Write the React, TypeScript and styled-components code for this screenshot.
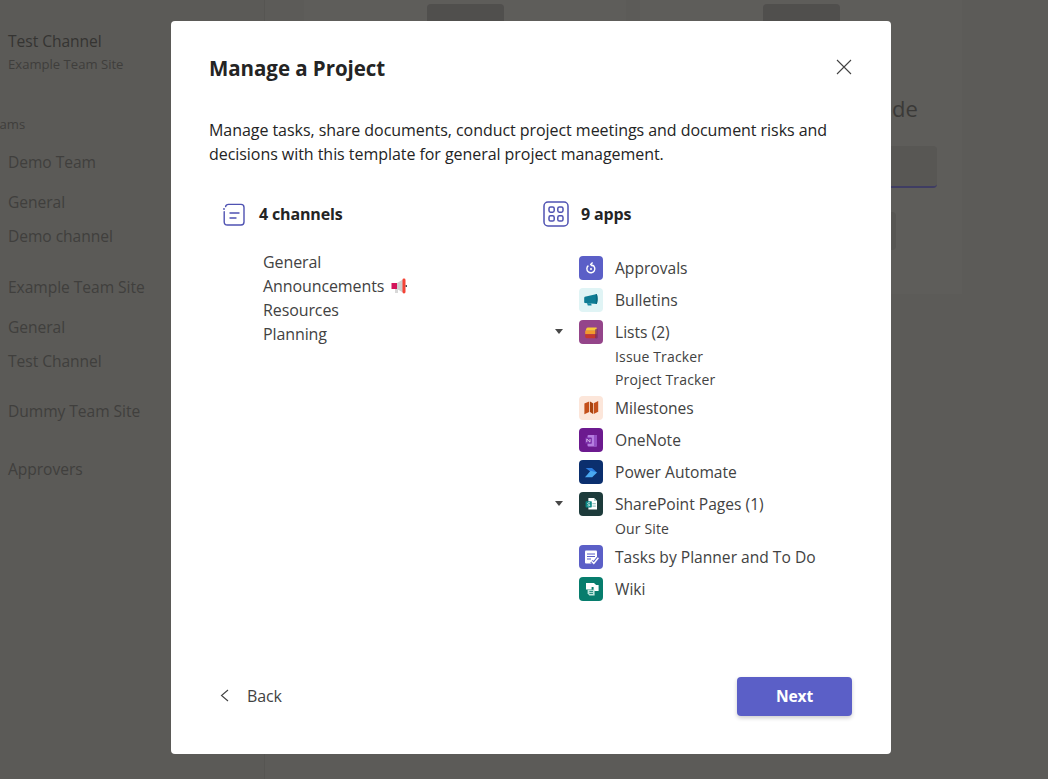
import React from 'react';
import styled, { createGlobalStyle } from 'styled-components';

const GlobalStyle = createGlobalStyle`
  html, body {
    margin: 0;
    padding: 0;
    height: 100%;
    overflow: hidden;
    background: #5c5b58;
    font-family: "Open Sans", "Noto Sans", "Liberation Sans", sans-serif;
  }
  #root { height: 100%; }
`;

const Page = styled.div`
  position: relative;
  display: flex;
  width: 1048px;
  height: 779px;
  overflow: hidden;
  background: #5c5b58;
`;

const Sidebar = styled.div`
  flex: 0 0 265px;
  box-sizing: border-box;
  padding: 30px 0 0 8px;
  background: #5b5a57;
  border-right: 1px solid #565552;
  color: #403f3d;
`;

const SideItem = styled.div<{ $gap?: number; $dark?: boolean }>`
  margin-top: ${(p) => p.$gap ?? 0}px;
  height: 22px;
  line-height: 22px;
  font-size: 15.6px;
  letter-spacing: -0.05px;
  white-space: nowrap;
  color: ${(p) => (p.$dark ? '#353432' : '#403f3d')};
`;

const SideSub = styled.div<{ $gap?: number; $shift?: number }>`
  margin-top: ${(p) => p.$gap ?? 0}px;
  margin-left: ${(p) => p.$shift ?? 0}px;
  height: 18px;
  line-height: 18px;
  font-size: 13.1px;
  white-space: nowrap;
  color: #3f3e3c;
`;

const Main = styled.div`
  flex: 1;
  display: flex;
  gap: 14px;
  align-items: flex-start;
  padding-left: 39px;
`;

const BackCard = styled.div`
  flex: 0 0 322px;
  box-sizing: border-box;
  height: 294px;
  padding: 4px 0 0;
  background: #5e5d5a;
  display: flex;
  flex-direction: column;
  align-items: center;
`;

const Thumb = styled.div`
  width: 77px;
  height: 40px;
  flex: none;
  border-radius: 4px;
  background: #504f4d;
`;

const BackHeading = styled.div`
  margin-top: 49px;
  margin-right: 4px;
  height: 30px;
  line-height: 30px;
  font-size: 22px;
  font-weight: 500;
  color: #3a3937;
  white-space: nowrap;
`;

const BackInput = styled.div`
  margin-top: 23px;
  align-self: flex-end;
  margin-right: 25px;
  box-sizing: border-box;
  width: 272px;
  height: 42px;
  border-radius: 4px;
  background: #585754;
  border-bottom: 2px solid #3f3d63;
`;

const BackButton = styled.div`
  margin-top: 24px;
  align-self: flex-end;
  margin-right: 66px;
  width: 100px;
  height: 38px;
  border-radius: 4px;
  background: #575653;
`;

const Overlay = styled.div`
  position: absolute;
  inset: 0;
  box-sizing: border-box;
  padding: 21px 0 0 171px;
`;

const Dialog = styled.div`
  box-sizing: border-box;
  width: 720px;
  height: 733px;
  padding: 32px 39px 38px 38px;
  border-radius: 4px;
  background: #ffffff;
  display: flex;
  flex-direction: column;
  color: #242424;
`;

const Header = styled.div`
  display: flex;
  justify-content: space-between;
  align-items: center;
  height: 30px;
`;

const Title = styled.h1`
  margin: 0;
  font-size: 20.5px;
  line-height: 30px;
  font-weight: 700;
  letter-spacing: -0.05px;
  color: #242424;
`;

const CloseButton = styled.button`
  border: 0;
  padding: 0;
  margin: -2px 0 0;
  width: 16px;
  height: 16px;
  display: flex;
  background: none;
  color: #424242;
`;

const Description = styled.p`
  margin: 35px 0 0;
  font-size: 16px;
  line-height: 24px;
  letter-spacing: -0.05px;
  color: #242424;
  width: 640px;
`;

const Columns = styled.div`
  display: flex;
  margin-top: 35px;
`;

const LeftCol = styled.div`
  flex: 0 0 321px;
  padding-left: 13px;
`;

const RightCol = styled.div`
  flex: 1;
`;

const ColHead = styled.div<{ $gap: number }>`
  display: flex;
  align-items: center;
  gap: ${(p) => p.$gap}px;
  height: 26px;
  font-size: 16px;
  font-weight: 700;
  letter-spacing: -0.15px;
  color: #242424;
`;

const ChannelList = styled.ul`
  list-style: none;
  margin: 23px 0 0;
  padding: 0 0 0 41px;
`;

const ChannelItem = styled.li`
  display: flex;
  align-items: center;
  gap: 7px;
  height: 24px;
  font-size: 16px;
  letter-spacing: -0.1px;
  color: #424242;
`;

const AppList = styled.ul`
  list-style: none;
  margin: 25px 0 0;
  padding: 0 0 0 12px;
`;

const AppRow = styled.li`
  position: relative;
  display: flex;
  align-items: center;
  gap: 12px;
  height: 32px;
  padding-left: 24px;
  font-size: 15.6px;
  color: #424242;
`;

const Caret = styled.span`
  position: absolute;
  left: 0;
  top: 13px;
  width: 0;
  height: 0;
  border-left: 4px solid transparent;
  border-right: 4px solid transparent;
  border-top: 5px solid #484848;
`;

const SubRow = styled.li<{ $top: number; $bottom: number }>`
  display: flex;
  align-items: center;
  height: 18px;
  margin: ${(p) => p.$top}px 0 ${(p) => p.$bottom}px;
  padding-left: 60px;
  font-size: 14px;
  letter-spacing: 0.15px;
  color: #424242;
`;

const Tile = styled.span<{ $bg: string }>`
  flex: none;
  width: 24px;
  height: 24px;
  border-radius: 4px;
  background: ${(p) => p.$bg};
  display: flex;
`;

const Footer = styled.div`
  margin-top: auto;
  display: flex;
  align-items: center;
  justify-content: space-between;
  padding-left: 11px;
`;

const BackLink = styled.button`
  border: 0;
  background: none;
  padding: 0 0 2px;
  display: flex;
  align-items: center;
  gap: 18px;
  font-family: inherit;
  font-size: 16px;
  letter-spacing: -0.1px;
  color: #424242;
`;

const NextButton = styled.button`
  width: 115px;
  height: 39px;
  border: 0;
  border-radius: 4px;
  padding: 0 0 2px;
  background: #5b5fc7;
  color: #ffffff;
  font-family: inherit;
  font-size: 15.6px;
  font-weight: 700;
  letter-spacing: -0.15px;
  box-shadow: 0 2px 4px rgba(0, 0, 0, 0.2);
`;

const ChannelsIcon = () => (
  <svg width="24" height="24" viewBox="0 0 24 24" fill="none" stroke="#4f52b2" strokeWidth="1.4" strokeLinecap="round">
    <path d="M3.6 4.6 Q4 2.4 6.5 2.4 H19 Q22 2.4 22 5.4 V20 Q22 23 19 23 H5.5 Q2.2 23 2.2 20 V9.6" />
    <circle cx="2" cy="7" r="0.9" fill="#4f52b2" stroke="none" />
    <path d="M8 11 H17" />
    <path d="M8 16 H14" />
  </svg>
);

const AppsIcon = () => (
  <svg width="26" height="26" viewBox="0 0 26 26" fill="none" stroke="#4f52b2" strokeWidth="1.5">
    <rect x="1" y="1" width="24" height="24" rx="4" />
    <rect x="6" y="6" width="5.2" height="5.2" rx="1.6" />
    <rect x="14.8" y="6" width="5.2" height="5.2" rx="1.6" />
    <rect x="6" y="14.8" width="5.2" height="5.2" rx="1.6" />
    <rect x="14.8" y="14.8" width="5.2" height="5.2" rx="1.6" />
  </svg>
);

const Megaphone = () => (
  <svg width="16" height="16" viewBox="0 0 16 16">
    <rect x="0.5" y="5" width="5.5" height="6" fill="#d4145a" />
    <path d="M6 5 L12 1.5 V14.5 L6 11 Z" fill="#cfcfcf" />
    <rect x="4" y="11" width="3" height="4" fill="#d8d8d8" />
    <rect x="11.5" y="0.5" width="3" height="15" rx="1.4" fill="#f44336" />
    <circle cx="15.3" cy="8" r="0.9" fill="#444" />
  </svg>
);

const ApprovalsArt = () => (
  <svg width="24" height="24" viewBox="0 0 24 24" fill="none" stroke="#fff" strokeWidth="1.4">
    <path d="M9.4 9.6 A4 4 0 1 0 13.2 9" />
    <path d="M13.6 6.4 L11.6 8.4 L13.6 10.2" strokeLinejoin="round" />
    <circle cx="12" cy="13" r="1" fill="#fff" stroke="none" />
  </svg>
);

const BulletinsArt = () => (
  <svg width="24" height="24" viewBox="0 0 24 24">
    <path d="M5.8 8.8 L18 6 V16 L5.8 15 Q5.2 15 5.2 14 V10 Q5.2 9 5.8 8.8 Z" fill="#0f7c94" />
    <path d="M16.8 6 Q18.8 6 18.8 11 Q18.8 16 16.8 16 Z" fill="#0a6a80" />
    <path d="M8 15 L8.8 17.4 H12.6 L12.2 15.4 Z" fill="#14869f" />
  </svg>
);

const ListsArt = () => (
  <svg width="24" height="24" viewBox="0 0 24 24">
    <path d="M7.4 8.6 Q7.6 7.4 9 7.4 H17.6 V10.8 H6.6 Z" fill="#f9c83a" />
    <rect x="6.2" y="10.8" width="11.4" height="3.4" fill="#f29a2e" />
    <path d="M6.2 14.2 H17.6 V16.8 Q17.4 18.2 16 18.2 H7.6 Q6.2 18.2 6.2 16.8 Z" fill="#c5382f" />
    <rect x="16" y="9" width="2.8" height="9.4" rx="0.8" fill="#6e2a62" opacity="0.6" />
  </svg>
);

const MilestonesArt = () => (
  <svg width="24" height="24" viewBox="0 0 24 24" fill="#c4501b">
    <path d="M5.4 7.6 L10.2 5.4 V16 L5.4 18.3 Z" />
    <path d="M11 5.4 L14 7.2 V18 L11 16 Z" fill="#a8430f" />
    <path d="M14.7 7.2 L19.2 5 V15.8 L14.7 18 Z" />
  </svg>
);

const OneNoteArt = () => (
  <svg width="24" height="24" viewBox="0 0 24 24">
    <rect x="8.5" y="7" width="9.5" height="11.4" rx="1" fill="#b57ee0" />
    <rect x="15" y="7" width="3" height="11.4" fill="#9550c6" />
    <rect x="6" y="9.6" width="6.8" height="6.2" rx="0.8" fill="#7a2aa8" />
    <path d="M7.8 14.2 V11 L11 14.2 V11" stroke="#e9d8f5" strokeWidth="0.8" fill="none" />
  </svg>
);

const AutomateArt = () => (
  <svg width="24" height="24" viewBox="0 0 24 24">
    <path d="M6.6 8 H13 L18 12.4 L15.2 14.6 Z" fill="#2b7de0" />
    <path d="M6 17.2 L11.6 10.8 L18 12.4 L13.2 17.2 Z" fill="#4aa8f0" />
  </svg>
);

const SharePointArt = () => (
  <svg width="24" height="24" viewBox="0 0 24 24">
    <path d="M9.4 6 H15 L18 9 V17.4 H9.4 Z" fill="#ffffff" />
    <path d="M15 6 V9 H18 Z" fill="#a9d3cf" />
    <rect x="13.4" y="11.2" width="3.4" height="1" fill="#7fb6b2" />
    <rect x="13.4" y="13.6" width="3.4" height="1" fill="#7fb6b2" />
    <rect x="6.6" y="9.2" width="6.2" height="6.2" rx="0.7" fill="#0b8a85" />
    <path d="M11 10.8 Q8.6 10.2 8.6 11.6 Q8.7 12.3 9.8 12.4 Q11.1 12.6 10.9 13.4 Q10.2 14.2 8.5 13.8" stroke="#fff" strokeWidth="0.7" fill="none" />
  </svg>
);

const TasksArt = () => (
  <svg width="24" height="24" viewBox="0 0 24 24">
    <path d="M7 5.5 H17 Q18 5.5 18 6.5 V12 L13 18.5 H7 Q6 18.5 6 17.5 V6.5 Q6 5.5 7 5.5 Z" fill="#fff" />
    <path d="M8 9 H16 M8 11.5 H16 M8 14 H12" stroke="#5b5fc7" strokeWidth="1" />
    <path d="M12.5 16.2 L14.8 18.4 L19.4 12.8" stroke="#5b5fc7" strokeWidth="3.4" fill="none" />
    <path d="M12.5 16.2 L14.8 18.4 L19.4 12.8" stroke="#fff" strokeWidth="1.5" fill="none" />
  </svg>
);

const WikiArt = () => (
  <svg width="24" height="24" viewBox="0 0 24 24">
    <path d="M7 6 H15 L17.6 8.4 V10 H12.6 V12.6 H7 Z" fill="#fff" />
    <rect x="14.6" y="8" width="5" height="6" fill="#fff" />
    <path d="M8.6 12.8 H15.6 V18.4 H10.4 L8.6 16.6 Z" fill="#bfe6dd" />
    <path d="M10.4 14.4 H14 M10.4 16.4 H14" stroke="#077d6d" strokeWidth="0.9" />
  </svg>
);

const App = () => (
  <>
    <GlobalStyle />
    <Page>
      <Sidebar>
        <SideItem $dark>Test Channel</SideItem>
        <SideSub $gap={3}>Example Team Site</SideSub>
        <SideSub $gap={42} $shift={-23}>Teams</SideSub>
        <SideItem $gap={18}>Demo Team</SideItem>
        <SideItem $gap={18}>General</SideItem>
        <SideItem $gap={12}>Demo channel</SideItem>
        <SideItem $gap={29}>Example Team Site</SideItem>
        <SideItem $gap={18}>General</SideItem>
        <SideItem $gap={12}>Test Channel</SideItem>
        <SideItem $gap={28}>Dummy Team Site</SideItem>
        <SideItem $gap={36}>Approvers</SideItem>
      </Sidebar>
      <Main>
        <BackCard>
          <Thumb />
        </BackCard>
        <BackCard>
          <Thumb />
          <BackHeading>Join a team with a code</BackHeading>
          <BackInput />
          <BackButton />
        </BackCard>
      </Main>
      <Overlay>
        <Dialog>
          <Header>
            <Title>Manage a Project</Title>
            <CloseButton aria-label="Close">
              <svg width="16" height="16" viewBox="0 0 16 16" fill="none" stroke="currentColor" strokeWidth="1.1">
                <path d="M1 1 L15 15 M15 1 L1 15" />
              </svg>
            </CloseButton>
          </Header>
          <Description>
            Manage tasks, share documents, conduct project meetings and document risks and decisions with this template for general project management.
          </Description>
          <Columns>
            <LeftCol>
              <ColHead $gap={13}>
                <ChannelsIcon />
                4 channels
              </ColHead>
              <ChannelList>
                <ChannelItem>General</ChannelItem>
                <ChannelItem>
                  Announcements
                  <Megaphone />
                </ChannelItem>
                <ChannelItem>Resources</ChannelItem>
                <ChannelItem>Planning</ChannelItem>
              </ChannelList>
            </LeftCol>
            <RightCol>
              <ColHead $gap={12}>
                <AppsIcon />
                9 apps
              </ColHead>
              <AppList>
                <AppRow>
                  <Tile $bg="#5b5fc7"><ApprovalsArt /></Tile>
                  Approvals
                </AppRow>
                <AppRow>
                  <Tile $bg="#e0f4f5"><BulletinsArt /></Tile>
                  Bulletins
                </AppRow>
                <AppRow>
                  <Caret />
                  <Tile $bg="#94458a"><ListsArt /></Tile>
                  Lists (2)
                </AppRow>
                <SubRow $top={-1} $bottom={0}>Issue Tracker</SubRow>
                <SubRow $top={5} $bottom={4}>Project Tracker</SubRow>
                <AppRow>
                  <Tile $bg="#fce6da"><MilestonesArt /></Tile>
                  Milestones
                </AppRow>
                <AppRow>
                  <Tile $bg="#6c1a8f"><OneNoteArt /></Tile>
                  OneNote
                </AppRow>
                <AppRow>
                  <Tile $bg="#0b2f6e"><AutomateArt /></Tile>
                  Power Automate
                </AppRow>
                <AppRow>
                  <Caret />
                  <Tile $bg="#1d3b3b"><SharePointArt /></Tile>
                  SharePoint Pages (1)
                </AppRow>
                <SubRow $top={-1} $bottom={4}>Our Site</SubRow>
                <AppRow>
                  <Tile $bg="#5b5fc7"><TasksArt /></Tile>
                  Tasks by Planner and To Do
                </AppRow>
                <AppRow>
                  <Tile $bg="#077d6d"><WikiArt /></Tile>
                  Wiki
                </AppRow>
              </AppList>
            </RightCol>
          </Columns>
          <Footer>
            <BackLink>
              <svg width="9" height="13" viewBox="0 0 9 13" fill="none" stroke="#424242" strokeWidth="1.1">
                <path d="M8 1 L1.5 6.5 L8 12" />
              </svg>
              Back
            </BackLink>
            <NextButton>Next</NextButton>
          </Footer>
        </Dialog>
      </Overlay>
    </Page>
  </>
);

export default App;
